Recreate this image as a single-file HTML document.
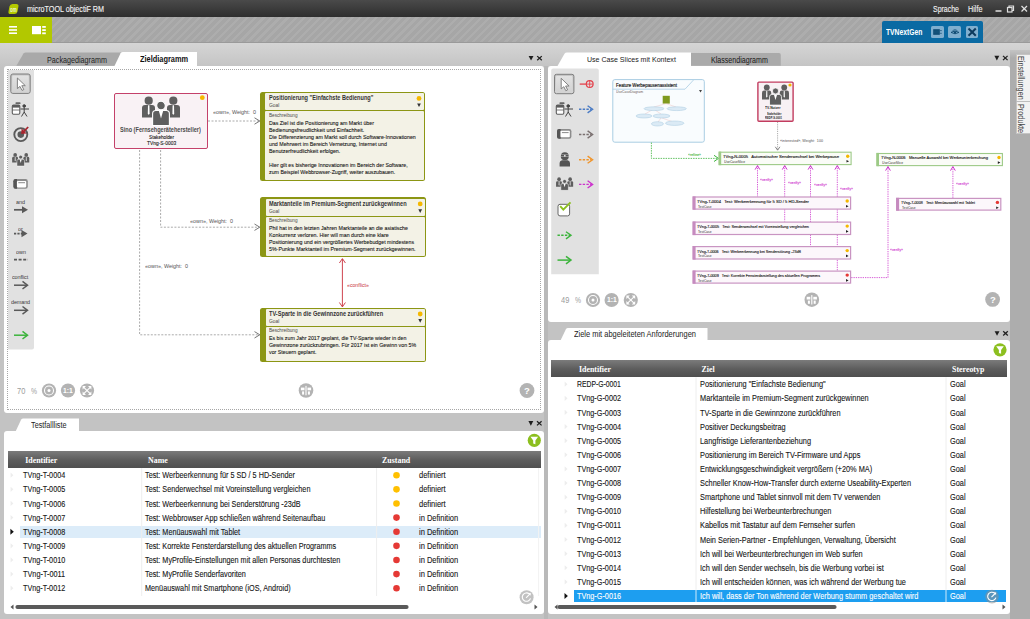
<!DOCTYPE html><html><head><meta charset="utf-8"><style>
*{margin:0;padding:0;box-sizing:border-box}
html,body{width:1030px;height:619px;overflow:hidden;background:#c3c3c3;font-family:'Liberation Sans',sans-serif}
.a{position:absolute}
.t{position:absolute;white-space:nowrap;font-family:'Liberation Sans',sans-serif}
svg{position:absolute;overflow:visible}
</style></head><body><div class="a" style="left:0px;top:0px;width:1030px;height:17px;background:linear-gradient(#4a4a4a,#2e2e2e)"></div><div class="a" style="left:9.2px;top:3.8px;width:8.6px;height:9.7px;background:#b3c800;border-radius:2.6px;transform:skewX(-11deg)"></div><div class="t" style="left:10.2px;top:6px;font-size:7.24px;line-height:8.69px;color:#eef4d0;font-weight:bold;transform:scaleX(0.626);transform-origin:0 0;">om</div><div class="t" style="left:27px;top:5px;font-size:8.28px;line-height:9.94px;color:#f4f4f4;transform:scaleX(0.869);transform-origin:0 0;-webkit-text-stroke:0.12px #f4f4f4;">microTOOL objectiF RM</div><div class="t" style="left:933px;top:5px;font-size:8.28px;line-height:9.94px;color:#f4f4f4;transform:scaleX(0.844);transform-origin:0 0;-webkit-text-stroke:0.1px #f4f4f4;">Sprache</div><div class="t" style="left:967.5px;top:5px;font-size:8.28px;line-height:9.94px;color:#f4f4f4;transform:scaleX(0.876);transform-origin:0 0;-webkit-text-stroke:0.1px #f4f4f4;">Hilfe</div><svg style="left:0;top:0" width="1030" height="17"><g stroke="#e0e0e0" stroke-width="1.2" fill="none"><line x1="995.5" y1="11" x2="1001.5" y2="11" stroke-width="1.5"/><rect x="1007.5" y="7.5" width="4.5" height="4.5"/><polyline points="1009,7.5 1009,6 1013.5,6 1013.5,10.5 1012,10.5"/><line x1="1021.5" y1="6" x2="1027" y2="11.5"/><line x1="1027" y1="6" x2="1021.5" y2="11.5"/></g></svg><div class="a" style="left:0px;top:43px;width:1030px;height:24px;background:linear-gradient(#d5d5d5,#c4c4c4)"></div><div class="a" style="left:544px;top:66px;width:4px;height:553px;background:#b9b9b9"></div><div class="a" style="left:0px;top:17px;width:1030px;height:26px;background:repeating-linear-gradient(135deg,#a6a6a6 0 3.4px,#adadad 3.4px 5.7px)"></div><div class="a" style="left:0px;top:17px;width:52px;height:26px;background:#b2c800"></div><div class="a" style="left:52px;top:42px;width:978px;height:1px;background:#9a9a9a"></div><svg style="left:0;top:17px" width="52" height="26"><g fill="#fff"><rect x="9" y="9" width="8" height="1.6"/><rect x="9" y="12.2" width="8" height="1.6"/><rect x="9" y="15.4" width="8" height="1.6"/><rect x="32" y="9" width="9" height="8.2"/><rect x="42.2" y="9" width="3.6" height="1.8"/><rect x="42.2" y="12.2" width="3.6" height="1.8"/><rect x="42.2" y="15.4" width="3.6" height="1.8"/></g></svg><div class="a" style="left:881.6px;top:21.3px;width:101.3px;height:21.7px;background:#0a6aa3;border-radius:2px 2px 0 0"></div><div class="t" style="left:886px;top:27px;font-size:8.74px;line-height:10.49px;color:#fff;font-weight:bold;transform:scaleX(0.771);transform-origin:0 0;">TVNextGen</div><div class="a" style="left:931.3px;top:26px;width:12.7px;height:12.4px;background:#80afcf;border-radius:1.6px"></div><div class="a" style="left:948.4px;top:26px;width:12.7px;height:12.4px;background:#80afcf;border-radius:1.6px"></div><div class="a" style="left:965.8px;top:26px;width:12.7px;height:12.4px;background:#80afcf;border-radius:1.6px"></div><svg style="left:0;top:0" width="1030" height="43"><rect x="933.2" y="29.2" width="6.6" height="5.6" fill="#0d4a72"/><line x1="933.2" y1="31.1" x2="939.8" y2="31.1" stroke="#2c6a92" stroke-width="0.4"/><line x1="933.2" y1="32.9" x2="939.8" y2="32.9" stroke="#2c6a92" stroke-width="0.4"/><rect x="940.4" y="30" width="1.1" height="1.1" fill="#0d4a72"/><rect x="940.4" y="32.8" width="1.1" height="1.1" fill="#0d4a72"/><path d="M951,32.4 Q955,29.6 959,32.4 Q955,35.2 951,32.4 Z" fill="none" stroke="#0d4a72" stroke-width="0.9"/><circle cx="955" cy="32.4" r="1.1" fill="#0d4a72"/><path d="M952.6,30.6 Q955,28.6 957.4,30.6" fill="none" stroke="#0d4a72" stroke-width="0.7"/><g stroke="#0d3b5e" stroke-width="2"><line x1="968.5" y1="28.5" x2="975.8" y2="35.8"/><line x1="975.8" y1="28.5" x2="968.5" y2="35.8"/></g></svg><div class="a" style="left:4px;top:65.5px;width:540px;height:347px;background:#fff;border-radius:3px"></div><div class="a" style="left:4px;top:430.5px;width:540px;height:183.5px;background:#fff;border-radius:3px"></div><div class="a" style="left:548px;top:65.5px;width:462px;height:256.5px;background:#fff;border-radius:3px"></div><div class="a" style="left:548px;top:340.3px;width:462px;height:273.7px;background:#fff;border-radius:3px"></div><div class="a" style="left:1010px;top:50px;width:20px;height:569px;background:linear-gradient(#c4c4c4,#adadad 8px,#adadad)"></div><svg style="left:0;top:0" width="1030" height="619"><path d="M16.4,65.8 L23.5,53.6 Q24.4,52.5 26,52.5 L122,52.5 L116,65.8 Z" fill="#a9a9a9"/><path d="M114.5,66 L120.6,53.2 Q121.3,52 123,52 L197,52 L197,66 Z" fill="#fff"/><path d="M691,53 L779,53 Q780.8,53 780.8,55 L780.8,65.8 L691,65.8 Z" fill="#aaaaaa"/><path d="M557.5,66 L564.5,53.8 Q565.3,52.6 567,52.6 L691,52.6 L691,66 Z" fill="#fff"/><path d="M15.8,431 L21.2,419.6 Q21.8,418.5 23.2,418.5 L79,418.5 L79,431 Z" fill="#fff"/><path d="M560.5,340.5 L566,329.1 Q566.6,328 568,328 L707.5,328 L707.5,340.5 Z" fill="#fff"/><path d="M528.6,56.0 L533.5,56.0 L531.0500000000001,60.6 Z" fill="#1e1e1e"/><g stroke="#1e1e1e" stroke-width="1.25"><line x1="537.2" y1="56.1" x2="541.8000000000001" y2="60.300000000000004"/><line x1="541.8000000000001" y1="56.1" x2="537.2" y2="60.300000000000004"/></g><path d="M994.4,55.8 L999.3,55.8 L996.85,60.4 Z" fill="#1e1e1e"/><g stroke="#1e1e1e" stroke-width="1.25"><line x1="1003.0" y1="55.9" x2="1007.6" y2="60.1"/><line x1="1007.6" y1="55.9" x2="1003.0" y2="60.1"/></g><path d="M528.4,421.1 L533.3,421.1 L530.85,425.7 Z" fill="#1e1e1e"/><g stroke="#1e1e1e" stroke-width="1.25"><line x1="537.0" y1="421.2" x2="541.6" y2="425.40000000000003"/><line x1="541.6" y1="421.2" x2="537.0" y2="425.40000000000003"/></g><path d="M994.6,331.2 L999.5,331.2 L997.0500000000001,335.79999999999995 Z" fill="#1e1e1e"/><g stroke="#1e1e1e" stroke-width="1.25"><line x1="1003.2" y1="331.29999999999995" x2="1007.8000000000001" y2="335.5"/><line x1="1007.8000000000001" y1="331.29999999999995" x2="1003.2" y2="335.5"/></g></svg><div class="t" style="left:46.7px;top:56px;font-size:8.28px;line-height:9.94px;color:#1e1e1e;transform:scaleX(0.870);transform-origin:0 0;">Packagediagramm</div><div class="t" style="left:140.4px;top:54px;font-size:8.51px;line-height:10.21px;color:#111;font-weight:bold;transform:scaleX(0.870);transform-origin:0 0;">Zieldiagramm</div><div class="t" style="left:587.3px;top:55px;font-size:8.11px;line-height:9.73px;color:#1a1a1a;transform:scaleX(0.870);transform-origin:0 0;">Use Case Slices mit Kontext</div><div class="t" style="left:711px;top:56px;font-size:8.16px;line-height:9.79px;color:#151515;transform:scaleX(0.870);transform-origin:0 0;">Klassendiagramm</div><div class="t" style="left:30.7px;top:420px;font-size:8.35px;line-height:10.02px;color:#1a1a1a;transform:scaleX(0.870);transform-origin:0 0;">Testfallliste</div><div class="t" style="left:574.3px;top:329px;font-size:8.58px;line-height:10.30px;color:#1a1a1a;transform:scaleX(0.870);transform-origin:0 0;">Ziele mit abgeleiteten Anforderungen</div><div class="a" style="left:1015.7px;top:54.2px;width:14.3px;height:79.9px;background:#f2f2f2;border:1px solid #c4c4c4;border-right:none"></div><div class="t" style="left:1015.5px;top:56px;width:10px;height:43px;font-size:8.4px;line-height:10px;color:#444;writing-mode:vertical-rl;transform:scaleY(0.87);transform-origin:0 0">Einstellungen</div><div class="a" style="left:1016.2px;top:101px;width:13.8px;height:0.9px;background:#bdbdbd"></div><div class="t" style="left:1015.5px;top:104.3px;width:10px;height:28px;font-size:8.4px;line-height:10px;color:#444;writing-mode:vertical-rl;transform:scaleY(0.87);transform-origin:0 0">Produkte</div><svg style="left:0;top:0" width="1030" height="619"><path d="M8,70 L34,70 L34,347.5 Q34,349.5 32,349.5 L8,349.5 Z" fill="#e1e1e1"/><g stroke="#a6a6a6" stroke-width="1" stroke-dasharray="1,1"><line x1="8" y1="69.5" x2="540" y2="69.5"/><line x1="7.5" y1="69" x2="7.5" y2="410"/><line x1="8" y1="409.5" x2="540" y2="409.5"/><line x1="540.5" y1="69" x2="540.5" y2="410"/></g><defs><linearGradient id="gbtn" x1="0" y1="0" x2="0" y2="1"><stop offset="0" stop-color="#c4c4c4"/><stop offset="1" stop-color="#d6d6d6"/></linearGradient><linearGradient id="gbtn2" x1="0" y1="0" x2="0" y2="1"><stop offset="0" stop-color="#e2e2e2"/><stop offset="1" stop-color="#d2d2d2"/></linearGradient></defs><rect x="10.8" y="74" width="19.4" height="19.4" rx="2" fill="url(#gbtn)" stroke="#7d7d7d" stroke-width="1"/><rect x="12.2" y="75.6" width="16.6" height="16.4" rx="1.2" fill="url(#gbtn2)"/><path transform="translate(17.4,78) scale(1)" d="M0,0 L0,10.6 L2.6,8.4 L4.6,12.4 L6.4,11.6 L4.4,7.7 L7.9,7.7 Z" fill="#fff" stroke="#777" stroke-width="0.9" stroke-linejoin="round"/><g fill="#666"><rect x="15.5" y="102.3" width="5" height="1.8" rx="0.6"/><rect x="12.3" y="105" width="7.5" height="9.2" rx="1.2" fill="#fff" stroke="#5c5c5c" stroke-width="1.1"/><rect x="12.3" y="105" width="7.5" height="2.6" fill="#5c5c5c"/><line x1="12.3" y1="110" x2="19.8" y2="110" stroke="#5c5c5c" stroke-width="0.8"/></g><g stroke="#444" stroke-width="1" fill="none"><circle cx="24.2" cy="106" r="1.3" fill="#444"/><line x1="24.2" y1="107.5" x2="24.2" y2="112"/><line x1="20.5" y1="109" x2="29" y2="109"/><line x1="24.2" y1="112" x2="21.5" y2="116.5"/><line x1="24.2" y1="112" x2="27" y2="116.5"/></g><circle cx="20.8" cy="134.6" r="6.5" fill="none" stroke="#5a5a5a" stroke-width="1.9"/><circle cx="20.8" cy="134.6" r="3.3" fill="#5a5a5a"/><g><line x1="28.2" y1="127" x2="23.6" y2="131.6" stroke="#a8242d" stroke-width="1.7"/><path d="M21.2,134 L21.6,128.6 L26.6,133.6 Z" fill="#a8242d"/></g><g transform="translate(20.7,153) scale(0.45)" fill="#5e5e5e"><circle cx="-12.3" cy="4.2" r="4.1"/><circle cx="12.3" cy="4.2" r="4.1"/><path d="M-19,21 L-19,11.5 Q-19,8.5 -16,8.5 L-9,8.5 Q-6,8.5 -6,11.5 L-6,21 Z"/><path d="M6,21 L6,11.5 Q6,8.5 9,8.5 L16,8.5 Q19,8.5 19,11.5 L19,21 Z"/><path d="M-13,8.7 L-11.6,8.7 L-11.4,17 L-12.3,18.5 L-13.2,17 Z" fill="#fff"/><path d="M11.6,8.7 L13,8.7 L13.2,17 L12.3,18.5 L11.4,17 Z" fill="#fff"/><circle cx="0" cy="9.1" r="4.3" stroke="#fff" stroke-width="1.1"/><path d="M-8.4,29 L-8.4,17.2 Q-8.4,14 -5.2,14 L5.2,14 Q8.4,14 8.4,17.2 L8.4,29 Z" stroke="#fff" stroke-width="1.1"/><path d="M-2.2,14.3 L2.2,14.3 L0,22 Z" fill="#fff"/></g><rect x="13.4" y="179.1" width="14.4" height="9.7" rx="2.2" fill="#8c8c8c"/><path d="M15.600000000000001,179.1 L17.0,179.1 L17.0,188.79999999999998 L15.600000000000001,188.79999999999998 Q13.4,188.79999999999998 13.4,186.6 L13.4,181.29999999999998 Q13.4,179.1 15.600000000000001,179.1 Z" fill="#555"/><rect x="16.9" y="180.9" width="9.3" height="6.5" rx="0.8" fill="#fff"/><rect x="18.3" y="182.2" width="6.7" height="1" fill="#8a8a8a"/><line x1="14" y1="209.8" x2="23" y2="209.8" stroke="#595959" stroke-width="1.7"/><path d="M22,206.3 L28,209.8 L22,213.3 Z" fill="#595959"/><line x1="14" y1="233.6" x2="22" y2="233.6" stroke="#595959" stroke-width="1.6" stroke-dasharray="2.2,1.2"/><path d="M21.5,230 L27.5,233.6 L21.5,237.2 Z" fill="#595959"/><line x1="14" y1="259.6" x2="28" y2="259.6" stroke="#595959" stroke-width="1.6" stroke-dasharray="3,1.6"/><line x1="14" y1="285.2" x2="27.0" y2="285.2" stroke="#595959" stroke-width="1.5"/><polyline points="22.5,281.4 27.5,285.2 22.5,289.0" fill="none" stroke="#595959" stroke-width="1.5"/><line x1="14" y1="310.3" x2="27.0" y2="310.3" stroke="#595959" stroke-width="1.5"/><polyline points="22.5,306.5 27.5,310.3 22.5,314.1" fill="none" stroke="#595959" stroke-width="1.5"/><line x1="14" y1="335.2" x2="27.0" y2="335.2" stroke="#3cb43c" stroke-width="1.5"/><polyline points="22.5,331.4 27.5,335.2 22.5,339.0" fill="none" stroke="#3cb43c" stroke-width="1.5"/></svg><div class="t" style="left:16.4px;top:198px;font-size:6.21px;line-height:7.45px;color:#3a3a3a;transform:scaleX(0.870);transform-origin:0 0;">and</div><div class="t" style="left:18.2px;top:225px;font-size:6.21px;line-height:7.45px;color:#3a3a3a;transform:scaleX(0.870);transform-origin:0 0;">or</div><div class="t" style="left:16px;top:248px;font-size:6.21px;line-height:7.45px;color:#3a3a3a;transform:scaleX(0.870);transform-origin:0 0;">own</div><div class="t" style="left:11.8px;top:273px;font-size:6.21px;line-height:7.45px;color:#3a3a3a;transform:scaleX(0.870);transform-origin:0 0;letter-spacing:-0.1px;">conflict</div><div class="t" style="left:11.1px;top:298px;font-size:6.21px;line-height:7.45px;color:#3a3a3a;transform:scaleX(0.870);transform-origin:0 0;letter-spacing:-0.1px;">demand</div><svg style="left:0;top:0" width="1030" height="619"><circle cx="49" cy="390.5" r="7.1" fill="#b3b3b3"/><circle cx="49" cy="390.5" r="4.5" fill="none" stroke="#fff" stroke-width="1.05"/><circle cx="49" cy="390.5" r="1.5" fill="#fff"/><circle cx="68" cy="390.5" r="7.1" fill="#b3b3b3"/><circle cx="87" cy="390.5" r="7.1" fill="#b3b3b3"/><g stroke="#fff" stroke-width="1.1"><line x1="83.8" y1="387.3" x2="90.2" y2="393.7"/><line x1="90.2" y1="387.3" x2="83.8" y2="393.7"/></g><g fill="#fff"><path d="M82.6,386.1 l3.4,0 l-3.4,3.4 z"/><path d="M91.4,386.1 l-3.4,0 l3.4,3.4 z"/><path d="M82.6,394.9 l3.4,0 l-3.4,-3.4 z"/><path d="M91.4,394.9 l-3.4,0 l3.4,-3.4 z"/></g></svg><div class="t" style="left:63.1px;top:387px;font-size:7.47px;line-height:8.96px;color:#fff;font-weight:bold;transform:scaleX(0.908);transform-origin:0 0;">1:1</div><div class="t" style="left:17.2px;top:387px;font-size:8.28px;line-height:9.94px;color:#9c9c9c;transform:scaleX(0.902);transform-origin:0 0;">70</div><div class="t" style="left:31px;top:387px;font-size:8.28px;line-height:9.94px;color:#9c9c9c;transform:scaleX(0.815);transform-origin:0 0;">%</div><svg style="left:0;top:0" width="1030" height="619"><circle cx="306" cy="390.5" r="7.3" fill="#b3b3b3"/><rect x="305.45" y="385.9" width="1.1" height="9.4" fill="#fff"/><rect x="300.9" y="387.6" width="3.6" height="2.7" fill="#fff"/><rect x="302.1" y="391.4" width="2" height="3.2" fill="#fff"/><rect x="307.5" y="387.6" width="3.6" height="2.7" fill="#fff"/><rect x="307.9" y="391.4" width="2" height="3.2" fill="#fff"/></svg><svg style="left:0;top:0" width="1030" height="619"><circle cx="527" cy="390.5" r="7.4" fill="#b3b3b3"/></svg><div class="t" style="left:524.1px;top:385px;font-size:9.66px;line-height:11.59px;color:#fff;font-weight:bold;transform:scaleX(0.982);transform-origin:0 0;">?</div><div class="a" style="left:114px;top:92.8px;width:93.6px;height:56.6px;background:#f9f2f5;border:1.7px solid #c4416a;border-radius:2px"></div><svg style="left:0;top:0" width="1030" height="619"><g transform="translate(161,96.5) scale(1.0)" fill="#5f5f5f"><circle cx="-12.3" cy="4.2" r="4.1"/><circle cx="12.3" cy="4.2" r="4.1"/><path d="M-19,21 L-19,11.5 Q-19,8.5 -16,8.5 L-9,8.5 Q-6,8.5 -6,11.5 L-6,21 Z"/><path d="M6,21 L6,11.5 Q6,8.5 9,8.5 L16,8.5 Q19,8.5 19,11.5 L19,21 Z"/><path d="M-13,8.7 L-11.6,8.7 L-11.4,17 L-12.3,18.5 L-13.2,17 Z" fill="#fff"/><path d="M11.6,8.7 L13,8.7 L13.2,17 L12.3,18.5 L11.4,17 Z" fill="#fff"/><circle cx="0" cy="9.1" r="4.3" stroke="#fff" stroke-width="1.1"/><path d="M-8.4,29 L-8.4,17.2 Q-8.4,14 -5.2,14 L5.2,14 Q8.4,14 8.4,17.2 L8.4,29 Z" stroke="#fff" stroke-width="1.1"/><path d="M-2.2,14.3 L2.2,14.3 L0,22 Z" fill="#fff"/></g><circle cx="202.3" cy="97.7" r="2.4" fill="#f5b800"/></svg><div class="t" style="left:120px;top:126px;font-size:6.42px;line-height:7.70px;color:#4a4a4a;font-weight:bold;transform:scaleX(0.870);transform-origin:0 0;">Sino (Fernsehgerätehersteller)</div><div class="t" style="left:148.5px;top:134px;font-size:5.4px;line-height:6.48px;color:#222;transform:scaleX(0.870);transform-origin:0 0;-webkit-text-stroke:0.12px #222;">Stakeholder</div><div class="t" style="left:146.5px;top:140px;font-size:5.63px;line-height:6.76px;color:#222;transform:scaleX(0.870);transform-origin:0 0;-webkit-text-stroke:0.12px #222;">TVng-S-0003</div><svg style="left:0;top:0" width="1030" height="619"><g fill="none" stroke="#8f8f8f" stroke-width="0.75" stroke-dasharray="2,1.5"><polyline points="208,121 259,121"/><polyline points="160.6,150 160.6,227.2 259,227.2"/><polyline points="139.6,150 139.6,334.8 259,334.8"/></g><g fill="none" stroke="#666" stroke-width="0.9"><polyline points="254.5,117.8 259.8,121 254.5,124.2"/><polyline points="254.5,224.0 259.8,227.2 254.5,230.39999999999998"/><polyline points="254.5,331.6 259.8,334.8 254.5,338.0"/></g><g stroke="#c8303c" stroke-width="0.9" fill="none"><line x1="342.4" y1="259" x2="342.4" y2="306.5"/><polyline points="339.4,263 342.4,258.6 345.4,263"/><polyline points="339.4,302.5 342.4,306.9 345.4,302.5"/></g></svg><div class="t" style="left:213px;top:108px;font-size:6.21px;line-height:7.45px;color:#555;transform:scaleX(0.870);transform-origin:0 0;">«own», Weight:&nbsp; 0</div><div class="t" style="left:189.8px;top:217px;font-size:6.21px;line-height:7.45px;color:#555;transform:scaleX(0.870);transform-origin:0 0;">«own», Weight:&nbsp; 0</div><div class="t" style="left:144.7px;top:262px;font-size:6.21px;line-height:7.45px;color:#555;transform:scaleX(0.870);transform-origin:0 0;">«own», Weight:&nbsp; 0</div><div class="t" style="left:346.8px;top:282px;font-size:5.98px;line-height:7.18px;color:#c8303c;transform:scaleX(0.870);transform-origin:0 0;">«conflict»</div><div class="a" style="left:260px;top:91.7px;width:165.3px;height:89.3px;background:#8c9614;border-radius:2.5px"></div><div class="a" style="left:265.4px;top:93.10000000000001px;width:158.5px;height:16.900000000000002px;background:#f3f2e6;border-radius:1px"></div><div class="a" style="left:265.4px;top:111.0px;width:158.5px;height:68.6px;background:#f3f2e6;border-radius:1px"></div><div class="t" style="left:269px;top:94px;font-size:6.42px;line-height:7.70px;color:#333;font-weight:bold;transform:scaleX(0.870);transform-origin:0 0;">Positionierung "Einfachste Bedienung"</div><div class="t" style="left:269px;top:102px;font-size:5.63px;line-height:6.76px;color:#4a4a4a;transform:scaleX(0.870);transform-origin:0 0;">Goal</div><svg style="left:0;top:0" width="1030" height="619"><circle cx="419.0" cy="98.4" r="2.4" fill="#f5b800"/><path d="M417.1,103.4 L420.90000000000003,103.4 L419.0,107.10000000000001 Z" fill="#333"/></svg><div class="t" style="left:268.5px;top:112px;font-size:5.36px;line-height:6.43px;color:#4a4a4a;transform:scaleX(0.870);transform-origin:0 0;">Beschreibung</div><div class="t" style="left:269px;top:120px;font-size:6.07px;line-height:7.28px;color:#151515;transform:scaleX(0.870);transform-origin:0 0;-webkit-text-stroke:0.1px #151515;">Das Ziel ist die Positionierung am Markt über</div><div class="t" style="left:269px;top:127px;font-size:6.07px;line-height:7.28px;color:#151515;transform:scaleX(0.870);transform-origin:0 0;-webkit-text-stroke:0.1px #151515;">Bedienungsfreudlichkeit und Einfachheit.</div><div class="t" style="left:269px;top:134px;font-size:6.07px;line-height:7.28px;color:#151515;transform:scaleX(0.870);transform-origin:0 0;-webkit-text-stroke:0.1px #151515;">Die Differenzierung am Markt soll durch Software-Innovationen</div><div class="t" style="left:269px;top:141px;font-size:6.07px;line-height:7.28px;color:#151515;transform:scaleX(0.870);transform-origin:0 0;-webkit-text-stroke:0.1px #151515;">und Mehrwert im Bereich Vernetzung, Internet und</div><div class="t" style="left:269px;top:148px;font-size:6.07px;line-height:7.28px;color:#151515;transform:scaleX(0.870);transform-origin:0 0;-webkit-text-stroke:0.1px #151515;">Benutzerfreudlichkeit erfolgen.</div><div class="t" style="left:269px;top:162px;font-size:6.07px;line-height:7.28px;color:#151515;transform:scaleX(0.870);transform-origin:0 0;-webkit-text-stroke:0.1px #151515;">Hier gilt es bisherige Innovationen im Bereich der Software,</div><div class="t" style="left:269px;top:169px;font-size:6.07px;line-height:7.28px;color:#151515;transform:scaleX(0.870);transform-origin:0 0;-webkit-text-stroke:0.1px #151515;">zum Beispiel Webbrowser-Zugriff, weiter auszubauen.</div><div class="a" style="left:260.2px;top:197.3px;width:166.3px;height:60.1px;background:#8c9614;border-radius:2.5px"></div><div class="a" style="left:265.59999999999997px;top:198.70000000000002px;width:159.5px;height:16.900000000000002px;background:#f3f2e6;border-radius:1px"></div><div class="a" style="left:265.59999999999997px;top:216.60000000000002px;width:159.5px;height:39.4px;background:#f3f2e6;border-radius:1px"></div><div class="t" style="left:269.2px;top:200px;font-size:6.46px;line-height:7.75px;color:#333;font-weight:bold;transform:scaleX(0.870);transform-origin:0 0;">Marktanteile im Premium-Segment zurückgewinnen</div><div class="t" style="left:269.2px;top:208px;font-size:5.63px;line-height:6.76px;color:#4a4a4a;transform:scaleX(0.870);transform-origin:0 0;">Goal</div><svg style="left:0;top:0" width="1030" height="619"><circle cx="420.2" cy="203.9" r="2.4" fill="#f5b800"/><path d="M418.3,209.2 L422.1,209.2 L420.2,212.9 Z" fill="#333"/></svg><div class="t" style="left:268.7px;top:217px;font-size:5.36px;line-height:6.43px;color:#4a4a4a;transform:scaleX(0.870);transform-origin:0 0;">Beschreibung</div><div class="t" style="left:269.2px;top:225px;font-size:6.07px;line-height:7.28px;color:#151515;transform:scaleX(0.870);transform-origin:0 0;-webkit-text-stroke:0.1px #151515;">Phil hat in den letzten Jahren Marktanteile an die asiatische</div><div class="t" style="left:269.2px;top:232px;font-size:6.07px;line-height:7.28px;color:#151515;transform:scaleX(0.870);transform-origin:0 0;-webkit-text-stroke:0.1px #151515;">Konkurrenz verloren. Hier will man durch eine klare</div><div class="t" style="left:269.2px;top:239px;font-size:6.07px;line-height:7.28px;color:#151515;transform:scaleX(0.870);transform-origin:0 0;-webkit-text-stroke:0.1px #151515;">Positionierung und ein vergrößertes Werbebudget mindestens</div><div class="t" style="left:269.2px;top:246px;font-size:6.07px;line-height:7.28px;color:#151515;transform:scaleX(0.870);transform-origin:0 0;-webkit-text-stroke:0.1px #151515;">5%-Punkte Marktanteil im Premium-Segment zurückgewinnen.</div><div class="a" style="left:260.2px;top:307.7px;width:166.3px;height:54.3px;background:#8c9614;border-radius:2.5px"></div><div class="a" style="left:265.59999999999997px;top:309.09999999999997px;width:159.5px;height:16.900000000000002px;background:#f3f2e6;border-radius:1px"></div><div class="a" style="left:265.59999999999997px;top:327.0px;width:159.5px;height:33.6px;background:#f3f2e6;border-radius:1px"></div><div class="t" style="left:269.2px;top:310px;font-size:6.46px;line-height:7.75px;color:#333;font-weight:bold;transform:scaleX(0.870);transform-origin:0 0;">TV-Sparte in die Gewinnzone zurückführen</div><div class="t" style="left:269.2px;top:318px;font-size:5.63px;line-height:6.76px;color:#4a4a4a;transform:scaleX(0.870);transform-origin:0 0;">Goal</div><svg style="left:0;top:0" width="1030" height="619"><circle cx="420.2" cy="314.0" r="2.4" fill="#f5b800"/><path d="M418.3,319.0 L422.1,319.0 L420.2,322.7 Z" fill="#333"/></svg><div class="t" style="left:268.7px;top:327px;font-size:5.36px;line-height:6.43px;color:#4a4a4a;transform:scaleX(0.870);transform-origin:0 0;">Beschreibung</div><div class="t" style="left:269.2px;top:335px;font-size:6.07px;line-height:7.28px;color:#151515;transform:scaleX(0.870);transform-origin:0 0;-webkit-text-stroke:0.1px #151515;">Es bis zum Jahr 2017 geplant, die TV-Sparte wieder in den</div><div class="t" style="left:269.2px;top:342px;font-size:6.07px;line-height:7.28px;color:#151515;transform:scaleX(0.870);transform-origin:0 0;-webkit-text-stroke:0.1px #151515;">Gewinnzone zurückzubringen. Für 2017 ist ein Gewinn von 5%</div><div class="t" style="left:269.2px;top:349px;font-size:6.07px;line-height:7.28px;color:#151515;transform:scaleX(0.870);transform-origin:0 0;-webkit-text-stroke:0.1px #151515;">vor Steuern geplant.</div><svg style="left:0;top:0" width="1030" height="619"><path d="M551.2,70.6 Q551.2,68.6 553.2,68.6 L596.8,68.6 Q598.8,68.6 598.8,70.6 L598.8,274.2 L551.2,274.2 Z" fill="#e1e1e1"/><rect x="554.5" y="74.3" width="19.4" height="19.4" rx="2" fill="url(#gbtn)" stroke="#7d7d7d" stroke-width="1"/><rect x="555.9" y="75.9" width="16.6" height="16.4" rx="1.2" fill="url(#gbtn2)"/><path transform="translate(561.2,78.3) scale(1)" d="M0,0 L0,10.6 L2.6,8.4 L4.6,12.4 L6.4,11.6 L4.4,7.7 L7.9,7.7 Z" fill="#fff" stroke="#777" stroke-width="0.9" stroke-linejoin="round"/><line x1="579.7" y1="84.1" x2="586.3" y2="84.1" stroke="#e4424c" stroke-width="1.3"/><circle cx="589.7" cy="84.1" r="3.4" fill="none" stroke="#e4424c" stroke-width="1.2"/><line x1="586.3" y1="84.1" x2="593.1" y2="84.1" stroke="#e4424c" stroke-width="0.9"/><line x1="589.7" y1="80.7" x2="589.7" y2="87.5" stroke="#e4424c" stroke-width="0.9"/><g transform="translate(544,0)"><g fill="#666"><rect x="15.5" y="102.3" width="5" height="1.8" rx="0.6"/><rect x="12.3" y="105" width="7.5" height="9.2" rx="1.2" fill="#fff" stroke="#5c5c5c" stroke-width="1.1"/><rect x="12.3" y="105" width="7.5" height="2.6" fill="#5c5c5c"/><line x1="12.3" y1="110" x2="19.8" y2="110" stroke="#5c5c5c" stroke-width="0.8"/></g><g stroke="#444" stroke-width="1" fill="none"><circle cx="24.2" cy="106" r="1.3" fill="#444"/><line x1="24.2" y1="107.5" x2="24.2" y2="112"/><line x1="20.5" y1="109" x2="29" y2="109"/><line x1="24.2" y1="112" x2="21.5" y2="116.5"/><line x1="24.2" y1="112" x2="27" y2="116.5"/></g></g><line x1="579" y1="109.3" x2="591.6" y2="109.3" stroke="#4a7bc4" stroke-width="1.4" stroke-dasharray="2.4,1.3"/><polyline points="587.6,105.7 592.6,109.3 587.6,112.89999999999999" fill="none" stroke="#4a7bc4" stroke-width="1.4"/><rect x="557" y="129" width="14.4" height="9.7" rx="2.2" fill="#8c8c8c"/><path d="M559.2,129 L560.6,129 L560.6,138.7 L559.2,138.7 Q557,138.7 557,136.5 L557,131.2 Q557,129 559.2,129 Z" fill="#555"/><rect x="560.5" y="130.8" width="9.3" height="6.5" rx="0.8" fill="#fff"/><rect x="561.9" y="132.1" width="6.7" height="1" fill="#8a8a8a"/><line x1="579" y1="134.5" x2="591.6" y2="134.5" stroke="#7a7070" stroke-width="1.4" stroke-dasharray="2.4,1.3"/><polyline points="587.6,130.9 592.6,134.5 587.6,138.1" fill="none" stroke="#7a7070" stroke-width="1.4"/><g fill="#555"><path d="M559.6,166.4 L559.6,163 Q559.6,160.6 562,160.2 L567.6,160.2 Q570,160.6 570,163 L570,166.4 Z"/><circle cx="564.8" cy="156.2" r="4"/><rect x="560.4" y="154.6" width="8.8" height="2.2" fill="#ddd"/><rect x="561" y="154.9" width="3" height="1.6" fill="#555"/><rect x="565.6" y="154.9" width="3" height="1.6" fill="#555"/></g><line x1="579" y1="159.7" x2="591.6" y2="159.7" stroke="#f0952c" stroke-width="1.4" stroke-dasharray="2.4,1.3"/><polyline points="587.6,156.1 592.6,159.7 587.6,163.29999999999998" fill="none" stroke="#f0952c" stroke-width="1.4"/><g transform="translate(564.6,177.3) scale(0.45)" fill="#5e5e5e"><circle cx="-12.3" cy="4.2" r="4.1"/><circle cx="12.3" cy="4.2" r="4.1"/><path d="M-19,21 L-19,11.5 Q-19,8.5 -16,8.5 L-9,8.5 Q-6,8.5 -6,11.5 L-6,21 Z"/><path d="M6,21 L6,11.5 Q6,8.5 9,8.5 L16,8.5 Q19,8.5 19,11.5 L19,21 Z"/><path d="M-13,8.7 L-11.6,8.7 L-11.4,17 L-12.3,18.5 L-13.2,17 Z" fill="#fff"/><path d="M11.6,8.7 L13,8.7 L13.2,17 L12.3,18.5 L11.4,17 Z" fill="#fff"/><circle cx="0" cy="9.1" r="4.3" stroke="#fff" stroke-width="1.1"/><path d="M-8.4,29 L-8.4,17.2 Q-8.4,14 -5.2,14 L5.2,14 Q8.4,14 8.4,17.2 L8.4,29 Z" stroke="#fff" stroke-width="1.1"/><path d="M-2.2,14.3 L2.2,14.3 L0,22 Z" fill="#fff"/></g><line x1="579" y1="184.4" x2="591.6" y2="184.4" stroke="#cc33cc" stroke-width="1.4" stroke-dasharray="2.4,1.3"/><polyline points="587.6,180.8 592.6,184.4 587.6,188.0" fill="none" stroke="#cc33cc" stroke-width="1.4"/><rect x="558" y="204.3" width="11.6" height="11.6" rx="2" fill="#fff" stroke="#666" stroke-width="1"/><polyline points="560.2,206.2 563.3,209.6 570.5,202.3" fill="none" stroke="#8cbf1f" stroke-width="1.9"/><line x1="557.5" y1="235.3" x2="570" y2="235.3" stroke="#3cb43c" stroke-width="1.4" stroke-dasharray="2.4,1.3"/><polyline points="566,231.70000000000002 571,235.3 566,238.9" fill="none" stroke="#3cb43c" stroke-width="1.4"/><line x1="557.5" y1="260.1" x2="570" y2="260.1" stroke="#3cb43c" stroke-width="1.5"/><polyline points="566,256.3 571,260.1 566,263.9" fill="none" stroke="#3cb43c" stroke-width="1.5"/></svg><svg style="left:0;top:0" width="1030" height="619"><circle cx="593" cy="300" r="7.1" fill="#b3b3b3"/><circle cx="593" cy="300" r="4.5" fill="none" stroke="#fff" stroke-width="1.05"/><circle cx="593" cy="300" r="1.5" fill="#fff"/><circle cx="611.6" cy="300" r="7.1" fill="#b3b3b3"/><circle cx="630.8" cy="300" r="7.1" fill="#b3b3b3"/><g stroke="#fff" stroke-width="1.1"><line x1="627.5999999999999" y1="296.8" x2="634.0" y2="303.2"/><line x1="634.0" y1="296.8" x2="627.5999999999999" y2="303.2"/></g><g fill="#fff"><path d="M626.4,295.6 l3.4,0 l-3.4,3.4 z"/><path d="M635.1999999999999,295.6 l-3.4,0 l3.4,3.4 z"/><path d="M626.4,304.4 l3.4,0 l-3.4,-3.4 z"/><path d="M635.1999999999999,304.4 l-3.4,0 l3.4,-3.4 z"/></g></svg><div class="t" style="left:606.7px;top:296px;font-size:7.47px;line-height:8.96px;color:#fff;font-weight:bold;transform:scaleX(0.908);transform-origin:0 0;">1:1</div><div class="t" style="left:560.7px;top:296px;font-size:8.28px;line-height:9.94px;color:#9c9c9c;transform:scaleX(0.902);transform-origin:0 0;">49</div><div class="t" style="left:575px;top:296px;font-size:8.28px;line-height:9.94px;color:#9c9c9c;transform:scaleX(0.815);transform-origin:0 0;">%</div><svg style="left:0;top:0" width="1030" height="619"><circle cx="811.8" cy="299.7" r="7.3" fill="#b3b3b3"/><rect x="811.25" y="295.09999999999997" width="1.1" height="9.4" fill="#fff"/><rect x="806.6999999999999" y="296.8" width="3.6" height="2.7" fill="#fff"/><rect x="807.9" y="300.59999999999997" width="2" height="3.2" fill="#fff"/><rect x="813.3" y="296.8" width="3.6" height="2.7" fill="#fff"/><rect x="813.6999999999999" y="300.59999999999997" width="2" height="3.2" fill="#fff"/></svg><svg style="left:0;top:0" width="1030" height="619"><circle cx="992.6" cy="299.4" r="7.4" fill="#b3b3b3"/></svg><div class="t" style="left:989.7px;top:294px;font-size:9.66px;line-height:11.59px;color:#fff;font-weight:bold;transform:scaleX(0.982);transform-origin:0 0;">?</div><svg style="left:0;top:0" width="1030" height="619"><rect x="612.8" y="79.6" width="91.5" height="62.6" rx="2" fill="#f9fcfe" stroke="#a9cde3" stroke-width="1"/><polyline points="612.8,89.2 685,89.2 693.5,80" fill="none" stroke="#a9cde3" stroke-width="0.8"/><path d="M699,90 L702,90 L700.5,92.4 Z" fill="#444"/><rect x="662.7" y="95.8" width="7.1" height="7.8" fill="#7f9a1f"/><g stroke="#e9b5b5" stroke-width="0.4"><line x1="666" y1="103.6" x2="654" y2="107"/><line x1="666" y1="103.6" x2="676" y2="107"/><line x1="652" y1="110" x2="645" y2="114"/><line x1="655" y1="110" x2="661" y2="114"/><line x1="661" y1="118" x2="658" y2="122"/><line x1="662" y1="118" x2="672" y2="121.5"/></g><ellipse cx="654.0" cy="108.69999999999999" rx="10.0" ry="1.8999999999999986" fill="#dbeaf5" stroke="#a6c8de" stroke-width="0.5"/><ellipse cx="676.7" cy="108.69999999999999" rx="9.699999999999989" ry="1.8999999999999986" fill="#dbeaf5" stroke="#a6c8de" stroke-width="0.5"/><ellipse cx="644.0" cy="116.0" rx="8.0" ry="2.0" fill="#dbeaf5" stroke="#a6c8de" stroke-width="0.5"/><ellipse cx="661.5" cy="116.0" rx="8.5" ry="2.0" fill="#dbeaf5" stroke="#a6c8de" stroke-width="0.5"/><ellipse cx="657.45" cy="123.85" rx="6.050000000000011" ry="2.1499999999999986" fill="#dbeaf5" stroke="#a6c8de" stroke-width="0.5"/><ellipse cx="674.7" cy="123.2" rx="9.300000000000011" ry="2.200000000000003" fill="#dbeaf5" stroke="#a6c8de" stroke-width="0.5"/><polyline points="651.4,142.6 651.4,158.4 718,158.4" fill="none" stroke="#3cb43c" stroke-width="0.8" stroke-dasharray="1.5,1"/><polyline points="714,155.3 718.5,158.4 714,161.5" fill="none" stroke="#3cb43c" stroke-width="1"/><rect x="757.9" y="82.1" width="35.2" height="39.1" rx="1" fill="#f8f1f4" stroke="#c23c5f" stroke-width="1.4"/><g transform="translate(775.5,84.5) scale(0.71)" fill="#5f5f5f"><circle cx="-12.3" cy="4.2" r="4.1"/><circle cx="12.3" cy="4.2" r="4.1"/><path d="M-19,21 L-19,11.5 Q-19,8.5 -16,8.5 L-9,8.5 Q-6,8.5 -6,11.5 L-6,21 Z"/><path d="M6,21 L6,11.5 Q6,8.5 9,8.5 L16,8.5 Q19,8.5 19,11.5 L19,21 Z"/><path d="M-13,8.7 L-11.6,8.7 L-11.4,17 L-12.3,18.5 L-13.2,17 Z" fill="#fff"/><path d="M11.6,8.7 L13,8.7 L13.2,17 L12.3,18.5 L11.4,17 Z" fill="#fff"/><circle cx="0" cy="9.1" r="4.3" stroke="#fff" stroke-width="1.1"/><path d="M-8.4,29 L-8.4,17.2 Q-8.4,14 -5.2,14 L5.2,14 Q8.4,14 8.4,17.2 L8.4,29 Z" stroke="#fff" stroke-width="1.1"/><path d="M-2.2,14.3 L2.2,14.3 L0,22 Z" fill="#fff"/></g><circle cx="790" cy="85" r="1.6" fill="#f5b800"/><line x1="777.6" y1="122" x2="777.6" y2="150" stroke="#888" stroke-width="0.7" stroke-dasharray="1.2,1"/><polyline points="775.3,146.8 777.6,150.2 779.9,146.8" fill="none" stroke="#666" stroke-width="0.8"/></svg><div class="t" style="left:616.3px;top:83px;font-size:4.48px;line-height:5.38px;color:#1a1a1a;transform:scaleX(0.983);transform-origin:0 0;-webkit-text-stroke:0.15px #1a1a1a;">Feature Werbepausenassistent</div><div class="t" style="left:616px;top:89px;font-size:4.25px;line-height:5.10px;color:#6a5a5a;transform:scaleX(0.805);transform-origin:0 0;">UseCaseDiagram</div><div class="t" style="left:765px;top:106px;font-size:3.91px;line-height:4.69px;color:#222;font-weight:bold;transform:scaleX(0.850);transform-origin:0 0;">TV-Nutzer</div><div class="t" style="left:766.5px;top:112px;font-size:3.91px;line-height:4.69px;color:#222;font-weight:bold;transform:scaleX(0.648);transform-origin:0 0;">Stakeholder</div><div class="t" style="left:764.5px;top:116px;font-size:3.91px;line-height:4.69px;color:#222;font-weight:bold;transform:scaleX(0.687);transform-origin:0 0;">REDP-S-0001</div><div class="t" style="left:780.3px;top:138px;font-size:4.37px;line-height:5.24px;color:#505050;transform:scaleX(0.846);transform-origin:0 0;">«interested», Weight:&nbsp; 100</div><div class="t" style="left:688px;top:152px;font-size:4.37px;line-height:5.24px;color:#3cb43c;font-weight:bold;transform:scaleX(0.777);transform-origin:0 0;">«refine»</div><svg style="left:0;top:0" width="1030" height="619"><g fill="none" stroke="#cc33cc" stroke-width="0.8"><line x1="757.5" y1="165.6" x2="757.5" y2="196.4" stroke-dasharray="1.3,1"/><polyline points="755.1,169.6 757.5,165.6 759.9,169.6" stroke-width="1"/><line x1="784.7" y1="165.6" x2="784.7" y2="221.5" stroke-dasharray="1.3,1"/><polyline points="782.3000000000001,169.6 784.7,165.6 787.1,169.6" stroke-width="1"/><line x1="810.5" y1="165.6" x2="810.5" y2="246" stroke-dasharray="1.3,1"/><polyline points="808.1,169.6 810.5,165.6 812.9,169.6" stroke-width="1"/><line x1="837.3" y1="165.6" x2="837.3" y2="270.5" stroke-dasharray="1.3,1"/><polyline points="834.9,169.6 837.3,165.6 839.6999999999999,169.6" stroke-width="1"/><polyline points="851.2,277.6 888,277.6 888,166.6" stroke-dasharray="1.3,1"/><polyline points="885.6,170.6 888,166.6 890.4,170.6" stroke-width="1"/><line x1="952.9" y1="197.8" x2="952.9" y2="166.6" stroke-dasharray="1.3,1"/><polyline points="950.5,170.6 952.9,166.6 955.3,170.6" stroke-width="1"/></g></svg><svg style="left:0;top:0" width="1030" height="619"><rect x="719.2" y="152.2" width="131.90000000000003" height="12.399999999999995" fill="#fafcf7" stroke="#9dca87" stroke-width="1.1"/><rect x="718.6" y="151.6" width="2.6" height="13.599999999999994" fill="#9dca87"/><circle cx="847.7" cy="156.2" r="1.7" fill="#f5b800"/><path d="M846.5,160.0 L849.1,161.29999999999998 L846.5,162.6 Z" fill="#222"/></svg><div class="t" style="left:722.8000000000001px;top:155px;font-size:4.14px;line-height:4.97px;color:#1a1a1a;transform:scaleX(1.010);transform-origin:0 0;-webkit-text-stroke:0.12px #1a1a1a;">TVng-N-0005&nbsp;&nbsp; Automatischer Senderwechsel bei Werbepause</div><div class="t" style="left:723.8000000000001px;top:160px;font-size:3.79px;line-height:4.55px;color:#333;transform:scaleX(0.884);transform-origin:0 0;">UseCaseSlice</div><svg style="left:0;top:0" width="1030" height="619"><rect x="877.0" y="153.5" width="125.40000000000002" height="12.099999999999984" fill="#fafcf7" stroke="#9dca87" stroke-width="1.1"/><rect x="876.4" y="152.9" width="2.6" height="13.299999999999983" fill="#9dca87"/><circle cx="999" cy="157.5" r="1.7" fill="#f5b800"/><path d="M997.8,161.3 L1000.4,162.6 L997.8,163.9 Z" fill="#222"/></svg><div class="t" style="left:880.6px;top:156px;font-size:4.14px;line-height:4.97px;color:#1a1a1a;transform:scaleX(0.991);transform-origin:0 0;-webkit-text-stroke:0.12px #1a1a1a;">TVng-N-0006&nbsp;&nbsp; Manuelle Auswahl bei Werbeunterbrechung</div><div class="t" style="left:881.6px;top:161px;font-size:3.79px;line-height:4.55px;color:#333;transform:scaleX(0.884);transform-origin:0 0;">UseCaseSlice</div><svg style="left:0;top:0" width="1030" height="619"><rect x="693.2" y="197.0" width="157.40000000000003" height="12.099999999999984" fill="#fcf7fb" stroke="#c994c2" stroke-width="1.2"/><rect x="692.6" y="196.4" width="3" height="13.299999999999983" fill="#c68bbf"/><circle cx="847.2" cy="201.0" r="1.7" fill="#f5b800"/><path d="M846.0,205.0 L848.6,206.3 L846.0,207.6 Z" fill="#222"/></svg><div class="t" style="left:697.4px;top:200px;font-size:4.14px;line-height:4.97px;color:#1a1a1a;transform:scaleX(0.994);transform-origin:0 0;-webkit-text-stroke:0.12px #1a1a1a;">TVng-T-0004&nbsp;&nbsp; Test: Werbeerkennung für 5 SD / 5 HD-Sender</div><div class="t" style="left:698.2px;top:205px;font-size:3.79px;line-height:4.55px;color:#333;transform:scaleX(0.856);transform-origin:0 0;">TestCase</div><svg style="left:0;top:0" width="1030" height="619"><rect x="693.2" y="222.1" width="157.40000000000003" height="12.399999999999995" fill="#fcf7fb" stroke="#c994c2" stroke-width="1.2"/><rect x="692.6" y="221.5" width="3" height="13.599999999999994" fill="#c68bbf"/><circle cx="847.2" cy="226.1" r="1.7" fill="#f5b800"/><path d="M846.0,230.1 L848.6,231.4 L846.0,232.7 Z" fill="#222"/></svg><div class="t" style="left:697.4px;top:225px;font-size:4.14px;line-height:4.97px;color:#1a1a1a;transform:scaleX(0.922);transform-origin:0 0;-webkit-text-stroke:0.12px #1a1a1a;">TVng-T-0005&nbsp;&nbsp; Test: Senderwechsel mit Voreinstellung vergleichen</div><div class="t" style="left:698.2px;top:230px;font-size:3.79px;line-height:4.55px;color:#333;transform:scaleX(0.856);transform-origin:0 0;">TestCase</div><svg style="left:0;top:0" width="1030" height="619"><rect x="693.2" y="246.6" width="157.40000000000003" height="12.400000000000023" fill="#fcf7fb" stroke="#c994c2" stroke-width="1.2"/><rect x="692.6" y="246" width="3" height="13.600000000000023" fill="#c68bbf"/><circle cx="847.2" cy="250.6" r="1.7" fill="#f5b800"/><path d="M846.0,254.6 L848.6,255.9 L846.0,257.2 Z" fill="#222"/></svg><div class="t" style="left:697.4px;top:250px;font-size:4.14px;line-height:4.97px;color:#1a1a1a;transform:scaleX(0.898);transform-origin:0 0;-webkit-text-stroke:0.12px #1a1a1a;">TVng-T-0006&nbsp;&nbsp; Test: Werbeerkennung bei Senderstörung -23dB</div><div class="t" style="left:698.2px;top:254px;font-size:3.79px;line-height:4.55px;color:#333;transform:scaleX(0.856);transform-origin:0 0;">TestCase</div><svg style="left:0;top:0" width="1030" height="619"><rect x="693.2" y="271.1" width="157.40000000000003" height="11.99999999999999" fill="#fcf7fb" stroke="#c994c2" stroke-width="1.2"/><rect x="692.6" y="270.5" width="3" height="13.199999999999989" fill="#c68bbf"/><circle cx="847.2" cy="275.1" r="1.7" fill="#e53935"/><path d="M846.0,279.1 L848.6,280.4 L846.0,281.7 Z" fill="#222"/></svg><div class="t" style="left:697.4px;top:274px;font-size:4.14px;line-height:4.97px;color:#1a1a1a;transform:scaleX(0.904);transform-origin:0 0;-webkit-text-stroke:0.12px #1a1a1a;">TVng-T-0009&nbsp;&nbsp; Test: Korrekte Fensterdarstellung des aktuellen Programms</div><div class="t" style="left:698.2px;top:279px;font-size:3.79px;line-height:4.55px;color:#333;transform:scaleX(0.856);transform-origin:0 0;">TestCase</div><svg style="left:0;top:0" width="1030" height="619"><rect x="896.7" y="198.4" width="104.09999999999995" height="11.699999999999978" fill="#fcf7fb" stroke="#c994c2" stroke-width="1.2"/><rect x="896.1" y="197.8" width="3" height="12.899999999999977" fill="#c68bbf"/><circle cx="997.4" cy="202.4" r="1.7" fill="#e53935"/><path d="M996.1999999999999,206.4 L998.8,207.70000000000002 L996.1999999999999,209.0 Z" fill="#222"/></svg><div class="t" style="left:900.9px;top:201px;font-size:4.14px;line-height:4.97px;color:#1a1a1a;transform:scaleX(0.908);transform-origin:0 0;-webkit-text-stroke:0.12px #1a1a1a;">TVng-T-0008&nbsp;&nbsp; Test: Menüauswahl mit Tablet</div><div class="t" style="left:901.7px;top:206px;font-size:3.79px;line-height:4.55px;color:#333;transform:scaleX(0.856);transform-origin:0 0;">TestCase</div><div class="t" style="left:759.5px;top:177px;font-size:4.37px;line-height:5.24px;color:#cc33cc;font-weight:bold;transform:scaleX(0.789);transform-origin:0 0;">«verify»</div><div class="t" style="left:787.7px;top:180px;font-size:4.37px;line-height:5.24px;color:#cc33cc;font-weight:bold;transform:scaleX(0.789);transform-origin:0 0;">«verify»</div><div class="t" style="left:813.5px;top:182px;font-size:4.37px;line-height:5.24px;color:#cc33cc;font-weight:bold;transform:scaleX(0.789);transform-origin:0 0;">«verify»</div><div class="t" style="left:839.7px;top:186px;font-size:4.37px;line-height:5.24px;color:#cc33cc;font-weight:bold;transform:scaleX(0.789);transform-origin:0 0;">«verify»</div><div class="t" style="left:889.6px;top:247px;font-size:4.37px;line-height:5.24px;color:#cc33cc;font-weight:bold;transform:scaleX(0.789);transform-origin:0 0;">«verify»</div><div class="t" style="left:956px;top:181px;font-size:4.37px;line-height:5.24px;color:#cc33cc;font-weight:bold;transform:scaleX(0.789);transform-origin:0 0;">«verify»</div><svg style="left:0;top:0" width="1030" height="619"><circle cx="534.3" cy="440.3" r="6.6" fill="#8cbf1f"/><path d="M530.5,436.7 L538.0999999999999,436.7 L535.4,440.6 L535.4,444.3 L533.1999999999999,443.5 L533.1999999999999,440.6 Z" fill="#fff"/></svg><div class="a" style="left:7.5px;top:451px;width:533.3px;height:17px;background:linear-gradient(#7b7b7b,#5c5c5c 55%,#4f4f4f)"></div><div class="t" style="left:25.2px;top:456px;font-size:7.9px;line-height:9.48px;color:#fff;font-weight:bold;font-family:'Liberation Serif',serif;">Identifier</div><div class="t" style="left:148px;top:456px;font-size:7.9px;line-height:9.48px;color:#fff;font-weight:bold;font-family:'Liberation Serif',serif;">Name</div><div class="t" style="left:382.1px;top:456px;font-size:7.9px;line-height:9.48px;color:#fff;font-weight:bold;font-family:'Liberation Serif',serif;">Zustand</div><div class="a" style="left:20.2px;top:525.6999999999999px;width:520.6px;height:12px;background:#dcecf9"></div><svg style="left:0;top:0" width="1030" height="619"><line x1="141.7" y1="468" x2="141.7" y2="596" stroke="#eeeeee" stroke-width="1"/><line x1="376.6" y1="468" x2="376.6" y2="596" stroke="#eeeeee" stroke-width="1"/><line x1="538.6" y1="468" x2="538.6" y2="596" stroke="#f2f2f2" stroke-width="1"/><path d="M10.6,472.59999999999997 L13.4,475.2 L10.6,477.8 Z" fill="#ededed"/><circle cx="396.5" cy="475.2" r="3.3" fill="#ffc000"/><path d="M10.6,486.72499999999997 L13.4,489.325 L10.6,491.925 Z" fill="#ededed"/><circle cx="396.5" cy="489.325" r="3.3" fill="#ffc000"/><path d="M10.6,500.84999999999997 L13.4,503.45 L10.6,506.05 Z" fill="#ededed"/><circle cx="396.5" cy="503.45" r="3.3" fill="#ffc000"/><path d="M10.6,514.975 L13.4,517.575 L10.6,520.1750000000001 Z" fill="#ededed"/><circle cx="396.5" cy="517.575" r="3.3" fill="#e53935"/><path d="M10.4,528.7 L13.8,531.7 L10.4,534.7 Z" fill="#111"/><circle cx="396.5" cy="531.7" r="3.3" fill="#e53935"/><path d="M10.6,543.225 L13.4,545.825 L10.6,548.4250000000001 Z" fill="#ededed"/><circle cx="396.5" cy="545.825" r="3.3" fill="#e53935"/><path d="M10.6,557.35 L13.4,559.95 L10.6,562.5500000000001 Z" fill="#ededed"/><circle cx="396.5" cy="559.95" r="3.3" fill="#e53935"/><path d="M10.6,571.475 L13.4,574.075 L10.6,576.6750000000001 Z" fill="#ededed"/><circle cx="396.5" cy="574.075" r="3.3" fill="#e53935"/><path d="M10.6,585.6 L13.4,588.2 L10.6,590.8000000000001 Z" fill="#ededed"/><circle cx="396.5" cy="588.2" r="3.3" fill="#e53935"/></svg><div class="t" style="left:22.7px;top:471px;font-size:8.28px;line-height:9.94px;color:#151515;transform:scaleX(0.875);transform-origin:0 0;-webkit-text-stroke:0.1px #151515;">TVng-T-0004</div><div class="t" style="left:145.4px;top:470px;font-size:8.35px;line-height:10.02px;color:#151515;transform:scaleX(0.870);transform-origin:0 0;-webkit-text-stroke:0.1px #151515;">Test: Werbeerkennung für 5 SD / 5 HD-Sender</div><div class="t" style="left:419.4px;top:470px;font-size:8.62px;line-height:10.34px;color:#151515;transform:scaleX(0.870);transform-origin:0 0;-webkit-text-stroke:0.1px #151515;">definiert</div><div class="t" style="left:22.7px;top:485px;font-size:8.28px;line-height:9.94px;color:#151515;transform:scaleX(0.875);transform-origin:0 0;-webkit-text-stroke:0.1px #151515;">TVng-T-0005</div><div class="t" style="left:145.4px;top:484px;font-size:8.35px;line-height:10.02px;color:#151515;transform:scaleX(0.870);transform-origin:0 0;-webkit-text-stroke:0.1px #151515;">Test: Senderwechsel mit Voreinstellung vergleichen</div><div class="t" style="left:419.4px;top:484px;font-size:8.62px;line-height:10.34px;color:#151515;transform:scaleX(0.870);transform-origin:0 0;-webkit-text-stroke:0.1px #151515;">definiert</div><div class="t" style="left:22.7px;top:500px;font-size:8.28px;line-height:9.94px;color:#151515;transform:scaleX(0.875);transform-origin:0 0;-webkit-text-stroke:0.1px #151515;">TVng-T-0006</div><div class="t" style="left:145.4px;top:499px;font-size:8.35px;line-height:10.02px;color:#151515;transform:scaleX(0.870);transform-origin:0 0;-webkit-text-stroke:0.1px #151515;">Test: Werbeerkennung bei Senderstörung -23dB</div><div class="t" style="left:419.4px;top:499px;font-size:8.62px;line-height:10.34px;color:#151515;transform:scaleX(0.870);transform-origin:0 0;-webkit-text-stroke:0.1px #151515;">definiert</div><div class="t" style="left:22.7px;top:514px;font-size:8.28px;line-height:9.94px;color:#151515;transform:scaleX(0.875);transform-origin:0 0;-webkit-text-stroke:0.1px #151515;">TVng-T-0007</div><div class="t" style="left:145.4px;top:513px;font-size:8.35px;line-height:10.02px;color:#151515;transform:scaleX(0.870);transform-origin:0 0;-webkit-text-stroke:0.1px #151515;">Test: Webbrowser App schließen während Seitenaufbau</div><div class="t" style="left:419.4px;top:513px;font-size:8.62px;line-height:10.34px;color:#151515;transform:scaleX(0.870);transform-origin:0 0;-webkit-text-stroke:0.1px #151515;">in Definition</div><div class="t" style="left:22.7px;top:528px;font-size:8.28px;line-height:9.94px;color:#151515;transform:scaleX(0.875);transform-origin:0 0;-webkit-text-stroke:0.1px #151515;">TVng-T-0008</div><div class="t" style="left:145.4px;top:527px;font-size:8.35px;line-height:10.02px;color:#151515;transform:scaleX(0.870);transform-origin:0 0;-webkit-text-stroke:0.1px #151515;">Test: Menüauswahl mit Tablet</div><div class="t" style="left:419.4px;top:527px;font-size:8.62px;line-height:10.34px;color:#151515;transform:scaleX(0.870);transform-origin:0 0;-webkit-text-stroke:0.1px #151515;">in Definition</div><div class="t" style="left:22.7px;top:542px;font-size:8.28px;line-height:9.94px;color:#151515;transform:scaleX(0.875);transform-origin:0 0;-webkit-text-stroke:0.1px #151515;">TVng-T-0009</div><div class="t" style="left:145.4px;top:541px;font-size:8.35px;line-height:10.02px;color:#151515;transform:scaleX(0.870);transform-origin:0 0;-webkit-text-stroke:0.1px #151515;">Test: Korrekte Fensterdarstellung des aktuellen Programms</div><div class="t" style="left:419.4px;top:541px;font-size:8.62px;line-height:10.34px;color:#151515;transform:scaleX(0.870);transform-origin:0 0;-webkit-text-stroke:0.1px #151515;">in Definition</div><div class="t" style="left:22.7px;top:556px;font-size:8.28px;line-height:9.94px;color:#151515;transform:scaleX(0.875);transform-origin:0 0;-webkit-text-stroke:0.1px #151515;">TVng-T-0010</div><div class="t" style="left:145.4px;top:555px;font-size:8.35px;line-height:10.02px;color:#151515;transform:scaleX(0.870);transform-origin:0 0;-webkit-text-stroke:0.1px #151515;">Test: MyProfile-Einstellungen mit allen Personas durchtesten</div><div class="t" style="left:419.4px;top:555px;font-size:8.62px;line-height:10.34px;color:#151515;transform:scaleX(0.870);transform-origin:0 0;-webkit-text-stroke:0.1px #151515;">in Definition</div><div class="t" style="left:22.7px;top:570px;font-size:8.28px;line-height:9.94px;color:#151515;transform:scaleX(0.886);transform-origin:0 0;-webkit-text-stroke:0.1px #151515;">TVng-T-0011</div><div class="t" style="left:145.4px;top:569px;font-size:8.35px;line-height:10.02px;color:#151515;transform:scaleX(0.870);transform-origin:0 0;-webkit-text-stroke:0.1px #151515;">Test: MyProfile Senderfavoriten</div><div class="t" style="left:419.4px;top:569px;font-size:8.62px;line-height:10.34px;color:#151515;transform:scaleX(0.870);transform-origin:0 0;-webkit-text-stroke:0.1px #151515;">in Definition</div><div class="t" style="left:22.7px;top:584px;font-size:8.28px;line-height:9.94px;color:#151515;transform:scaleX(0.875);transform-origin:0 0;-webkit-text-stroke:0.1px #151515;">TVng-T-0012</div><div class="t" style="left:145.4px;top:583px;font-size:8.35px;line-height:10.02px;color:#151515;transform:scaleX(0.870);transform-origin:0 0;-webkit-text-stroke:0.1px #151515;">Menüauswahl mit Smartphone (iOS, Android)</div><div class="t" style="left:419.4px;top:583px;font-size:8.62px;line-height:10.34px;color:#151515;transform:scaleX(0.870);transform-origin:0 0;-webkit-text-stroke:0.1px #151515;">in Definition</div><svg style="left:0;top:0" width="1030" height="619"><line x1="17.5" y1="607" x2="406.5" y2="607" stroke="#5a5a5a" stroke-width="4.2" stroke-linecap="round"/><path d="M13.5,604.4 L10.5,607 L13.5,609.6 Z" fill="#555"/><path d="M534.5,604.4 L537.5,607 L534.5,609.6 Z" fill="#555"/></svg><svg style="left:0;top:0" width="1030" height="619"><circle cx="526.6" cy="597.3" r="7" fill="#8f8f8f" opacity="0.55"/><path d="M529.2,593.9 A4.2,4.2 0 1 0 530.5,598.3" fill="none" stroke="#fff" stroke-width="1.1"/><line x1="526.1" y1="597.8" x2="530.2" y2="593.6999999999999" stroke="#fff" stroke-width="1.1"/><path d="M528.1,593.3 L530.8000000000001,593.0999999999999 L530.6,595.8 Z" fill="#fff"/></svg><svg style="left:0;top:0" width="1030" height="619"><circle cx="1000" cy="349.8" r="6.6" fill="#8cbf1f"/><path d="M996.2,346.2 L1003.8,346.2 L1001.1,350.1 L1001.1,353.8 L998.9,353.0 L998.9,350.1 Z" fill="#fff"/></svg><div class="a" style="left:551px;top:360.3px;width:455.5px;height:16.9px;background:linear-gradient(#7b7b7b,#5c5c5c 55%,#4f4f4f)"></div><div class="t" style="left:579px;top:365px;font-size:7.9px;line-height:9.48px;color:#fff;font-weight:bold;font-family:'Liberation Serif',serif;">Identifier</div><div class="t" style="left:701.6px;top:365px;font-size:7.9px;line-height:9.48px;color:#fff;font-weight:bold;font-family:'Liberation Serif',serif;">Ziel</div><div class="t" style="left:952px;top:365px;font-size:7.9px;line-height:9.48px;color:#fff;font-weight:bold;font-family:'Liberation Serif',serif;">Stereotyp</div><div class="a" style="left:574.3px;top:589.8px;width:431.7px;height:12.4px;background:#1d9ef0"></div><svg style="left:0;top:0" width="1030" height="619"><line x1="696" y1="377.2" x2="696" y2="589.8" stroke="#eeeeee" stroke-width="1"/><line x1="946" y1="377.2" x2="946" y2="589.8" stroke="#eeeeee" stroke-width="1"/><line x1="696" y1="589.8" x2="696" y2="602.2" stroke="#fff" stroke-width="0.8"/><line x1="946" y1="589.8" x2="946" y2="602.2" stroke="#fff" stroke-width="0.8"/><path d="M564.7,381.59999999999997 L567.5,384.2 L564.7,386.8 Z" fill="#ededed"/><path d="M564.7,395.71999999999997 L567.5,398.32 L564.7,400.92 Z" fill="#ededed"/><path d="M564.7,409.84 L567.5,412.44 L564.7,415.04 Z" fill="#ededed"/><path d="M564.7,423.96 L567.5,426.56 L564.7,429.16 Z" fill="#ededed"/><path d="M564.7,438.08 L567.5,440.68 L564.7,443.28000000000003 Z" fill="#ededed"/><path d="M564.7,452.19999999999993 L567.5,454.79999999999995 L564.7,457.4 Z" fill="#ededed"/><path d="M564.7,466.31999999999994 L567.5,468.91999999999996 L564.7,471.52 Z" fill="#ededed"/><path d="M564.7,480.43999999999994 L567.5,483.03999999999996 L564.7,485.64 Z" fill="#ededed"/><path d="M564.7,494.55999999999995 L567.5,497.15999999999997 L564.7,499.76 Z" fill="#ededed"/><path d="M564.7,508.67999999999995 L567.5,511.28 L564.7,513.88 Z" fill="#ededed"/><path d="M564.7,522.8 L567.5,525.4 L564.7,528.0 Z" fill="#ededed"/><path d="M564.7,536.92 L567.5,539.52 L564.7,542.12 Z" fill="#ededed"/><path d="M564.7,551.04 L567.5,553.64 L564.7,556.24 Z" fill="#ededed"/><path d="M564.7,565.16 L567.5,567.76 L564.7,570.36 Z" fill="#ededed"/><path d="M564.7,579.28 L567.5,581.88 L564.7,584.48 Z" fill="#ededed"/><path d="M564.5,593.0 L567.9,596.0 L564.5,599.0 Z" fill="#111"/></svg><div class="t" style="left:577px;top:380px;font-size:8.28px;line-height:9.94px;color:#151515;transform:scaleX(0.824);transform-origin:0 0;-webkit-text-stroke:0.1px #151515;">REDP-G-0001</div><div class="t" style="left:699.8px;top:379px;font-size:8.48px;line-height:10.18px;color:#151515;transform:scaleX(0.870);transform-origin:0 0;-webkit-text-stroke:0.1px #151515;">Positionierung "Einfachste Bedienung"</div><div class="t" style="left:949.6px;top:379px;font-size:8.48px;line-height:10.18px;color:#151515;transform:scaleX(0.870);transform-origin:0 0;-webkit-text-stroke:0.1px #151515;">Goal</div><div class="t" style="left:577px;top:394px;font-size:8.28px;line-height:9.94px;color:#151515;transform:scaleX(0.879);transform-origin:0 0;-webkit-text-stroke:0.1px #151515;">TVng-G-0002</div><div class="t" style="left:699.8px;top:393px;font-size:8.48px;line-height:10.18px;color:#151515;transform:scaleX(0.870);transform-origin:0 0;-webkit-text-stroke:0.1px #151515;">Marktanteile im Premium-Segment zurückgewinnen</div><div class="t" style="left:949.6px;top:393px;font-size:8.48px;line-height:10.18px;color:#151515;transform:scaleX(0.870);transform-origin:0 0;-webkit-text-stroke:0.1px #151515;">Goal</div><div class="t" style="left:577px;top:409px;font-size:8.28px;line-height:9.94px;color:#151515;transform:scaleX(0.879);transform-origin:0 0;-webkit-text-stroke:0.1px #151515;">TVng-G-0003</div><div class="t" style="left:699.8px;top:408px;font-size:8.48px;line-height:10.18px;color:#151515;transform:scaleX(0.870);transform-origin:0 0;-webkit-text-stroke:0.1px #151515;">TV-Sparte in die Gewinnzone zurückführen</div><div class="t" style="left:949.6px;top:408px;font-size:8.48px;line-height:10.18px;color:#151515;transform:scaleX(0.870);transform-origin:0 0;-webkit-text-stroke:0.1px #151515;">Goal</div><div class="t" style="left:577px;top:423px;font-size:8.28px;line-height:9.94px;color:#151515;transform:scaleX(0.879);transform-origin:0 0;-webkit-text-stroke:0.1px #151515;">TVng-G-0004</div><div class="t" style="left:699.8px;top:422px;font-size:8.48px;line-height:10.18px;color:#151515;transform:scaleX(0.870);transform-origin:0 0;-webkit-text-stroke:0.1px #151515;">Positiver Deckungsbeitrag</div><div class="t" style="left:949.6px;top:422px;font-size:8.48px;line-height:10.18px;color:#151515;transform:scaleX(0.870);transform-origin:0 0;-webkit-text-stroke:0.1px #151515;">Goal</div><div class="t" style="left:577px;top:437px;font-size:8.28px;line-height:9.94px;color:#151515;transform:scaleX(0.879);transform-origin:0 0;-webkit-text-stroke:0.1px #151515;">TVng-G-0005</div><div class="t" style="left:699.8px;top:436px;font-size:8.48px;line-height:10.18px;color:#151515;transform:scaleX(0.870);transform-origin:0 0;-webkit-text-stroke:0.1px #151515;">Langfristige Lieferantenbeziehung</div><div class="t" style="left:949.6px;top:436px;font-size:8.48px;line-height:10.18px;color:#151515;transform:scaleX(0.870);transform-origin:0 0;-webkit-text-stroke:0.1px #151515;">Goal</div><div class="t" style="left:577px;top:451px;font-size:8.28px;line-height:9.94px;color:#151515;transform:scaleX(0.879);transform-origin:0 0;-webkit-text-stroke:0.1px #151515;">TVng-G-0006</div><div class="t" style="left:699.8px;top:450px;font-size:8.48px;line-height:10.18px;color:#151515;transform:scaleX(0.870);transform-origin:0 0;-webkit-text-stroke:0.1px #151515;">Positionierung im Bereich TV-Firmware und Apps</div><div class="t" style="left:949.6px;top:450px;font-size:8.48px;line-height:10.18px;color:#151515;transform:scaleX(0.870);transform-origin:0 0;-webkit-text-stroke:0.1px #151515;">Goal</div><div class="t" style="left:577px;top:465px;font-size:8.28px;line-height:9.94px;color:#151515;transform:scaleX(0.879);transform-origin:0 0;-webkit-text-stroke:0.1px #151515;">TVng-G-0007</div><div class="t" style="left:699.8px;top:464px;font-size:8.48px;line-height:10.18px;color:#151515;transform:scaleX(0.870);transform-origin:0 0;-webkit-text-stroke:0.1px #151515;">Entwicklungsgeschwindigkeit vergrößern (+20% MA)</div><div class="t" style="left:949.6px;top:464px;font-size:8.48px;line-height:10.18px;color:#151515;transform:scaleX(0.870);transform-origin:0 0;-webkit-text-stroke:0.1px #151515;">Goal</div><div class="t" style="left:577px;top:479px;font-size:8.28px;line-height:9.94px;color:#151515;transform:scaleX(0.879);transform-origin:0 0;-webkit-text-stroke:0.1px #151515;">TVng-G-0008</div><div class="t" style="left:699.8px;top:478px;font-size:8.48px;line-height:10.18px;color:#151515;transform:scaleX(0.870);transform-origin:0 0;-webkit-text-stroke:0.1px #151515;">Schneller Know-How-Transfer durch externe Useability-Experten</div><div class="t" style="left:949.6px;top:478px;font-size:8.48px;line-height:10.18px;color:#151515;transform:scaleX(0.870);transform-origin:0 0;-webkit-text-stroke:0.1px #151515;">Goal</div><div class="t" style="left:577px;top:493px;font-size:8.28px;line-height:9.94px;color:#151515;transform:scaleX(0.879);transform-origin:0 0;-webkit-text-stroke:0.1px #151515;">TVng-G-0009</div><div class="t" style="left:699.8px;top:492px;font-size:8.48px;line-height:10.18px;color:#151515;transform:scaleX(0.870);transform-origin:0 0;-webkit-text-stroke:0.1px #151515;">Smartphone und Tablet sinnvoll mit dem TV verwenden</div><div class="t" style="left:949.6px;top:492px;font-size:8.48px;line-height:10.18px;color:#151515;transform:scaleX(0.870);transform-origin:0 0;-webkit-text-stroke:0.1px #151515;">Goal</div><div class="t" style="left:577px;top:507px;font-size:8.28px;line-height:9.94px;color:#151515;transform:scaleX(0.879);transform-origin:0 0;-webkit-text-stroke:0.1px #151515;">TVng-G-0010</div><div class="t" style="left:699.8px;top:506px;font-size:8.48px;line-height:10.18px;color:#151515;transform:scaleX(0.870);transform-origin:0 0;-webkit-text-stroke:0.1px #151515;">Hilfestellung bei Werbeunterbrechungen</div><div class="t" style="left:949.6px;top:506px;font-size:8.48px;line-height:10.18px;color:#151515;transform:scaleX(0.870);transform-origin:0 0;-webkit-text-stroke:0.1px #151515;">Goal</div><div class="t" style="left:577px;top:521px;font-size:8.28px;line-height:9.94px;color:#151515;transform:scaleX(0.889);transform-origin:0 0;-webkit-text-stroke:0.1px #151515;">TVng-G-0011</div><div class="t" style="left:699.8px;top:520px;font-size:8.48px;line-height:10.18px;color:#151515;transform:scaleX(0.870);transform-origin:0 0;-webkit-text-stroke:0.1px #151515;">Kabellos mit Tastatur auf dem Fernseher surfen</div><div class="t" style="left:949.6px;top:520px;font-size:8.48px;line-height:10.18px;color:#151515;transform:scaleX(0.870);transform-origin:0 0;-webkit-text-stroke:0.1px #151515;">Goal</div><div class="t" style="left:577px;top:536px;font-size:8.28px;line-height:9.94px;color:#151515;transform:scaleX(0.879);transform-origin:0 0;-webkit-text-stroke:0.1px #151515;">TVng-G-0012</div><div class="t" style="left:699.8px;top:535px;font-size:8.48px;line-height:10.18px;color:#151515;transform:scaleX(0.870);transform-origin:0 0;-webkit-text-stroke:0.1px #151515;">Mein Serien-Partner - Empfehlungen, Verwaltung, Übersicht</div><div class="t" style="left:949.6px;top:535px;font-size:8.48px;line-height:10.18px;color:#151515;transform:scaleX(0.870);transform-origin:0 0;-webkit-text-stroke:0.1px #151515;">Goal</div><div class="t" style="left:577px;top:550px;font-size:8.28px;line-height:9.94px;color:#151515;transform:scaleX(0.879);transform-origin:0 0;-webkit-text-stroke:0.1px #151515;">TVng-G-0013</div><div class="t" style="left:699.8px;top:549px;font-size:8.48px;line-height:10.18px;color:#151515;transform:scaleX(0.870);transform-origin:0 0;-webkit-text-stroke:0.1px #151515;">Ich will bei Werbeunterbrechungen im Web surfen</div><div class="t" style="left:949.6px;top:549px;font-size:8.48px;line-height:10.18px;color:#151515;transform:scaleX(0.870);transform-origin:0 0;-webkit-text-stroke:0.1px #151515;">Goal</div><div class="t" style="left:577px;top:564px;font-size:8.28px;line-height:9.94px;color:#151515;transform:scaleX(0.879);transform-origin:0 0;-webkit-text-stroke:0.1px #151515;">TVng-G-0014</div><div class="t" style="left:699.8px;top:563px;font-size:8.48px;line-height:10.18px;color:#151515;transform:scaleX(0.870);transform-origin:0 0;-webkit-text-stroke:0.1px #151515;">Ich will den Sender wechseln, bis die Werbung vorbei ist</div><div class="t" style="left:949.6px;top:563px;font-size:8.48px;line-height:10.18px;color:#151515;transform:scaleX(0.870);transform-origin:0 0;-webkit-text-stroke:0.1px #151515;">Goal</div><div class="t" style="left:577px;top:578px;font-size:8.28px;line-height:9.94px;color:#151515;transform:scaleX(0.879);transform-origin:0 0;-webkit-text-stroke:0.1px #151515;">TVng-G-0015</div><div class="t" style="left:699.8px;top:577px;font-size:8.48px;line-height:10.18px;color:#151515;transform:scaleX(0.870);transform-origin:0 0;-webkit-text-stroke:0.1px #151515;">Ich will entscheiden können, was ich während der Werbung tue</div><div class="t" style="left:949.6px;top:577px;font-size:8.48px;line-height:10.18px;color:#151515;transform:scaleX(0.870);transform-origin:0 0;-webkit-text-stroke:0.1px #151515;">Goal</div><div class="t" style="left:577px;top:592px;font-size:8.28px;line-height:9.94px;color:#fff;transform:scaleX(0.879);transform-origin:0 0;-webkit-text-stroke:0.1px #fff;">TVng-G-0016</div><div class="t" style="left:699.8px;top:591px;font-size:8.48px;line-height:10.18px;color:#fff;transform:scaleX(0.870);transform-origin:0 0;-webkit-text-stroke:0.1px #fff;">Ich will, dass der Ton während der Werbung stumm geschaltet wird</div><div class="t" style="left:949.6px;top:591px;font-size:8.48px;line-height:10.18px;color:#fff;transform:scaleX(0.870);transform-origin:0 0;-webkit-text-stroke:0.1px #fff;">Goal</div><svg style="left:0;top:0" width="1030" height="619"><line x1="559.5" y1="607" x2="834.5" y2="607" stroke="#5a5a5a" stroke-width="4.2" stroke-linecap="round"/><path d="M557.5,604.4 L554.5,607 L557.5,609.6 Z" fill="#555"/><path d="M1002.5,604.4 L1005.5,607 L1002.5,609.6 Z" fill="#555"/></svg><svg style="left:0;top:0" width="1030" height="619"><circle cx="992" cy="596.6" r="6.8" fill="#8f8f8f" opacity="0.55"/><path d="M994.6,593.2 A4.2,4.2 0 1 0 995.9,597.6" fill="none" stroke="#fff" stroke-width="1.1"/><line x1="991.5" y1="597.1" x2="995.6" y2="593.0" stroke="#fff" stroke-width="1.1"/><path d="M993.5,592.6 L996.2,592.4 L996,595.1 Z" fill="#fff"/></svg></body></html>
